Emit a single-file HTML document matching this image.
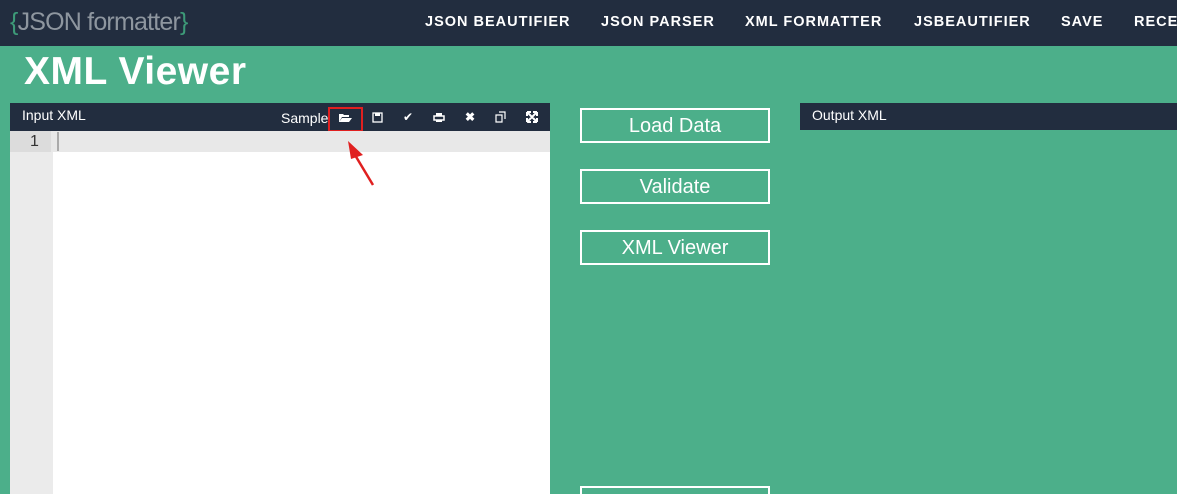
<!DOCTYPE html>
<html><head><style>
*{margin:0;padding:0;box-sizing:border-box}
html,body{width:1177px;height:494px;overflow:hidden}
body{background:#4caf8a;font-family:"Liberation Sans",sans-serif;position:relative}
.nav{position:absolute;left:0;top:0;width:1177px;height:46px;background:#222d3f}
.logo{position:absolute;left:10px;top:8px;font-size:25px;color:#8e969f;letter-spacing:-0.8px}
.logo b{color:#3d9a78;font-weight:normal}
.nav .links{position:absolute;left:425px;top:14px;white-space:nowrap;color:#fff;font-weight:bold;font-size:14.5px;letter-spacing:1px}
.nav .links span{position:absolute;top:0}
h1{position:absolute;left:24px;top:50px;font-size:39px;color:#fff;font-weight:bold;letter-spacing:0.5px}
.hdr{position:absolute;background:#222d3f;color:#fff;font-size:14px}
.ed{position:absolute;left:10px;top:131px;width:540px;height:363px;background:#fff}
.gut{position:absolute;left:0;top:0;width:43px;height:363px;background:#ebebeb}
.l1{position:absolute;left:0;top:0;width:540px;height:21px;background:#e8e8e8}
.num{position:absolute;left:0;top:0;width:41px;height:21px;background:#dcdcdc;font-size:16px;color:#333;text-align:center;padding-left:8px;padding-top:2px}
.btn{position:absolute;left:580px;width:190px;height:35px;border:2px solid #fff;color:#fff;font-size:20px;text-align:center;line-height:33px}
.ic{position:absolute;top:110px;color:#fff;font-size:12px}
</style></head><body>
<div class="nav"><div class="logo"><b>{</b>JSON formatter<b>}</b></div>
<div class="links"><span style="left:0">JSON BEAUTIFIER</span><span style="left:176px">JSON PARSER</span><span style="left:320px">XML FORMATTER</span><span style="left:489px">JSBEAUTIFIER</span><span style="left:636px">SAVE</span><span style="left:709px">RECENT</span></div></div>
<h1>XML Viewer</h1>
<div class="hdr" style="left:10px;top:103px;width:540px;height:28px"><span style="position:absolute;left:12px;top:4px">Input XML</span><span style="position:absolute;left:271px;top:7px">Sample</span></div>
<div style="position:absolute;left:328px;top:107px;width:35px;height:25px;border:2px solid #e02020"></div>
<svg style="position:absolute;left:338px;top:113px" width="14" height="10"><path d="M1 1h4l1 1h5v2H4L1 9z M4 5h10l-3 4H1z" fill="#fff"/></svg>
<svg style="position:absolute;left:372px;top:112px" width="11" height="11"><rect x="1" y="1" width="9" height="9" fill="none" stroke="#fff" stroke-width="1.3"/><rect x="3" y="1" width="5" height="3" fill="#fff"/></svg>
<span class="ic" style="left:403px">✔</span>
<svg style="position:absolute;left:433px;top:112px" width="12" height="11"><rect x="3" y="1" width="6" height="3" fill="#fff"/><rect x="1" y="4" width="10" height="4" fill="none" stroke="#fff" stroke-width="1.5"/><rect x="3" y="8" width="6" height="2" fill="#fff"/></svg>
<span class="ic" style="left:465px;font-weight:bold">✖</span>
<svg style="position:absolute;left:495px;top:111px" width="12" height="12"><path d="M1 4h6v7H1z M4 1h6v7" fill="none" stroke="#fff" stroke-width="1.2"/></svg>
<svg style="position:absolute;left:526px;top:111px" width="12" height="12"><path d="M1 1l10 10M11 1L1 11M1 1h4M1 1v4M11 1h-4M11 1v4M1 11h4M1 11v-4M11 11h-4M11 11v-4" stroke="#fff" stroke-width="2"/></svg>
<div class="ed"><div class="gut"></div><div class="l1"></div><div class="num">1</div><div style="position:absolute;left:47px;top:1px;width:2px;height:19px;background:#aaa"></div></div>
<svg style="position:absolute;left:340px;top:135px" width="40" height="55"><path d="M33 50L15 20" stroke="#e02020" stroke-width="2.5"/><path d="M8 6l15 14-12 4z" fill="#e02020"/></svg>
<div class="btn" style="top:108px">Load Data</div>
<div class="btn" style="top:169px">Validate</div>
<div class="btn" style="top:230px">XML Viewer</div>
<div style="position:absolute;left:580px;top:486px;width:190px;height:8px;border:2px solid #fff;border-bottom:none"></div>
<div class="hdr" style="left:800px;top:103px;width:377px;height:27px"><span style="position:absolute;left:12px;top:4px">Output XML</span></div>
</body></html>
